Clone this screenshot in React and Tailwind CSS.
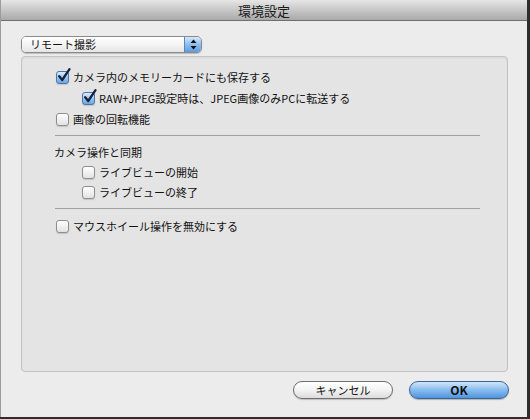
import React from "react";

const font = { fontFamily: '"Noto Sans CJK JP", "Noto Sans", sans-serif' };

function Check({ checked }) {
  return (
    <span className="relative w-[13px] h-[13px] shrink-0">
      <span
        className={
          checked
            ? "absolute inset-0 rounded-[3px] border border-[#4f76a6] bg-gradient-to-b from-[#dcecfb] via-[#9cc8f0] to-[#6aa6e2] shadow-[0_1px_1px_rgba(0,0,0,0.15)]"
            : "absolute inset-0 rounded-[3px] border border-[#8e8e8e] bg-gradient-to-b from-[#ffffff] to-[#e2e2e2] shadow-[0_1px_1px_rgba(0,0,0,0.15)]"
        }
      />
      {checked && (
        <svg className="absolute left-[1px] top-[-3px]" width="14" height="15" viewBox="0 0 14 15">
          <path
            d="M2.2 8.2 L5.2 12 L12.5 1.2"
            fill="none"
            stroke="#15233f"
            strokeWidth="2.3"
            strokeLinecap="round"
            strokeLinejoin="round"
          />
        </svg>
      )}
    </span>
  );
}

function Row({ checked, indent, children, className = "h-[21px]" }) {
  return (
    <div className={`flex items-center gap-[4px] ${indent ? "pl-[60px]" : "pl-[34px]"} ${className}`}>
      <Check checked={checked} />
      <span className="text-[11px] leading-none text-[#111]">{children}</span>
    </div>
  );
}

function Separator({ className }) {
  return <div className={`h-px bg-[#a2a2a2] ml-[33px] mr-[27px] ${className}`} />;
}

export default function App() {
  return (
    <div className="w-[530px] h-[419px] bg-[#2d2d2d]" style={font}>
      <div className="w-[527px] h-[417px] bg-[#ececec] border-l border-[#9c9c9c] flex flex-col">
        <div className="h-[21px] shrink-0 bg-gradient-to-b from-[#e6e6e6] to-[#a9a9a9] border-b border-[#6f6f6f] flex items-center justify-center">
          <span className="text-[13px] leading-none text-[#1a1a1a]">環境設定</span>
        </div>

        <div className="flex flex-col pl-[20px]">
          <div className="mt-[15px] w-[181px] h-[17px] flex rounded-[5px] border border-[#8a8a8a] overflow-hidden shadow-[0_1px_1px_rgba(0,0,0,0.2)]">
            <div className="flex-1 flex items-center pl-[8px] bg-gradient-to-b from-[#ffffff] via-[#f4f4f4] to-[#e6e6e6]">
              <span className="text-[11px] leading-none text-[#111]">リモート撮影</span>
            </div>
            <div className="w-[17px] border-l border-[#5f86b8] bg-gradient-to-b from-[#d6e8fa] via-[#8fbdee] to-[#5d9de0] flex items-center justify-center">
              <svg width="7" height="11" viewBox="0 0 7 11">
                <path d="M3.5 0.5 L6.5 4 L0.5 4 Z" fill="#111" />
                <path d="M3.5 10.5 L6.5 7 L0.5 7 Z" fill="#111" />
              </svg>
            </div>
          </div>

          <div className="mt-[3px] w-[487px] h-[316px] rounded-[4px] border border-[#c3c3c3] bg-[#e4e4e4] shadow-[inset_0_1px_2px_rgba(0,0,0,0.06)] pt-[10px] flex flex-col">
            <Row checked>カメラ内のメモリーカードにも保存する</Row>
            <Row checked indent>RAW+JPEG設定時は、JPEG画像のみPCに転送する</Row>
            <Row>画像の回転機能</Row>
            <Separator className="mt-[5px]" />
            <div className="mt-[6px] h-[20px] flex items-center pl-[32px]">
              <span className="text-[11px] leading-none text-[#111]">カメラ操作と同期</span>
            </div>
            <Row indent className="h-[20px]">ライブビューの開始</Row>
            <Row indent className="h-[20px]">ライブビューの終了</Row>
            <Separator className="mt-[6px]" />
            <Row className="mt-[7px] h-[20px]">マウスホイール操作を無効にする</Row>
          </div>

          <div className="mt-[9px] flex justify-end gap-[16px] pr-[18px]">
            <button className="w-[100px] h-[18px] rounded-full border border-[#6e6e6e] bg-gradient-to-b from-[#ffffff] via-[#f3f3f3] to-[#dcdcdc] shadow-[0_1px_1px_rgba(0,0,0,0.2)] flex items-center justify-center">
              <span className="text-[11px] leading-none text-[#111]">キャンセル</span>
            </button>
            <button className="w-[100px] h-[18px] rounded-full border border-[#3c6597] bg-gradient-to-b from-[#d2e6fa] via-[#86bbee] to-[#4f95dd] shadow-[0_1px_1px_rgba(0,0,0,0.25)] flex items-center justify-center">
              <span className="text-[12px] leading-none font-semibold text-[#111]">OK</span>
            </button>
          </div>
        </div>
      </div>
    </div>
  );
}
